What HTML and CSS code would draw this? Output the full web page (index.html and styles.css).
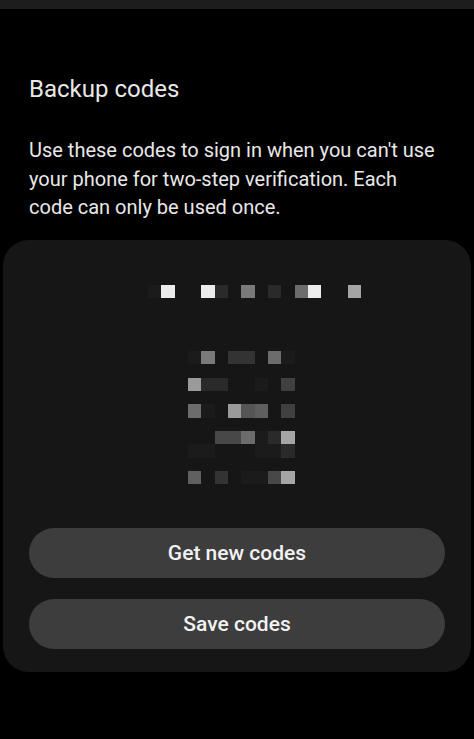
FILE: index.html
```html
<!DOCTYPE html>
<html lang="en">
<head>
    <meta charset="UTF-8">
    <meta name="viewport" content="width=device-width, initial-scale=1.0">
    <title>Backup codes</title>
    <link rel="stylesheet" href="styles.css">
</head>
<body>
    <div class="status-bar"></div>
    <div class="page">
        <h1 class="title">Backup codes</h1>
        <p class="description">Use these codes to sign in when you can't use your phone for two-step verification. Each code can only be used once.</p>
    </div>
    <div class="card">
        <div class="codes">
            <!-- row 1 -->
            <div class="cell c-faint" style="grid-area: 1 / 1"></div>
            <div class="cell c-white" style="grid-area: 1 / 2"></div>
            <div class="cell c-white" style="grid-area: 1 / 5"></div>
            <div class="cell c-dark" style="grid-area: 1 / 6"></div>
            <div class="cell c-mid" style="grid-area: 1 / 8"></div>
            <div class="cell c-dark" style="grid-area: 1 / 10"></div>
            <div class="cell c-mid2" style="grid-area: 1 / 12"></div>
            <div class="cell c-white" style="grid-area: 1 / 13"></div>
            <div class="cell c-light" style="grid-area: 1 / 16"></div>
            <!-- row 6 -->
            <div class="cell c-faint" style="grid-area: 6 / 4"></div>
            <div class="cell c-mid" style="grid-area: 6 / 5"></div>
            <div class="cell c-dark2" style="grid-area: 6 / 7"></div>
            <div class="cell c-dark2" style="grid-area: 6 / 8"></div>
            <div class="cell c-mid2" style="grid-area: 6 / 10"></div>
            <div class="cell c-faint" style="grid-area: 6 / 11"></div>
            <!-- row 8 -->
            <div class="cell c-light2" style="grid-area: 8 / 4"></div>
            <div class="cell c-dark" style="grid-area: 8 / 5"></div>
            <div class="cell c-dark" style="grid-area: 8 / 6"></div>
            <div class="cell c-faint" style="grid-area: 8 / 9"></div>
            <div class="cell c-dark3" style="grid-area: 8 / 11"></div>
            <!-- row 10 -->
            <div class="cell c-mid2" style="grid-area: 10 / 4"></div>
            <div class="cell c-faint" style="grid-area: 10 / 5"></div>
            <div class="cell c-light2" style="grid-area: 10 / 7"></div>
            <div class="cell c-dim" style="grid-area: 10 / 8"></div>
            <div class="cell c-dim2" style="grid-area: 10 / 9"></div>
            <div class="cell c-dark3" style="grid-area: 10 / 11"></div>
            <!-- row 12 -->
            <div class="cell c-dark4" style="grid-area: 12 / 6"></div>
            <div class="cell c-dark4" style="grid-area: 12 / 7"></div>
            <div class="cell c-mid2" style="grid-area: 12 / 8"></div>
            <div class="cell c-faint" style="grid-area: 12 / 9"></div>
            <div class="cell c-dark" style="grid-area: 12 / 10"></div>
            <div class="cell c-light" style="grid-area: 12 / 11"></div>
            <!-- row 13 -->
            <div class="cell c-faint" style="grid-area: 13 / 4"></div>
            <div class="cell c-faint" style="grid-area: 13 / 5"></div>
            <div class="cell c-faint" style="grid-area: 13 / 9"></div>
            <div class="cell c-faint" style="grid-area: 13 / 10"></div>
            <div class="cell c-dark" style="grid-area: 13 / 11"></div>
            <!-- row 15 -->
            <div class="cell c-mid3" style="grid-area: 15 / 4"></div>
            <div class="cell c-dark2" style="grid-area: 15 / 6"></div>
            <div class="cell c-faint" style="grid-area: 15 / 8"></div>
            <div class="cell c-faint" style="grid-area: 15 / 9"></div>
            <div class="cell c-dark4" style="grid-area: 15 / 10"></div>
            <div class="cell c-light" style="grid-area: 15 / 11"></div>
        </div>
        <div class="actions">
            <button class="btn">Get new codes</button>
            <button class="btn">Save codes</button>
        </div>
    </div>
</body>
</html>
```

FILE: styles.css
```css
body {
    margin: 0;
    background: #000;
    font-family: Roboto, "Noto Sans", sans-serif;
    color: #e8e8e8;
    width: 474px;
    height: 739px;
    overflow: hidden;
}
.status-bar {
    height: 9px;
    background: #1d1d1d;
}
.page {
    padding: 0 30px 0 29px;
}
.title {
    margin: 66px 0 0;
    font-size: 24px;
    line-height: 28px;
    font-weight: 400;
}
.description {
    margin: 33px 0 0;
    font-size: 20px;
    line-height: 28.5px;
}
.card {
    margin: 18px 3px 0;
    background: #161616;
    border-radius: 26px;
    padding: 45px 26px 23px;
}
.codes {
    display: grid;
    grid-template-columns: repeat(16, 13.333px);
    grid-template-rows: repeat(15, 13.333px);
    margin-left: 119px;
}
.cell { background: #161616; }
.c-faint { background: #1b1b1b; }
.c-dark { background: #2a2a2a; }
.c-dark2 { background: #333; }
.c-dark3 { background: #404040; }
.c-dark4 { background: #484848; }
.c-dim { background: #555; }
.c-dim2 { background: #5e5e5e; }
.c-mid3 { background: #606060; }
.c-mid2 { background: #6c6c6c; }
.c-mid { background: #7a7a7a; }
.c-light2 { background: #9a9a9a; }
.c-light { background: #a5a5a5; }
.c-white { background: #ececec; }
.actions {
    display: flex;
    flex-direction: column;
    gap: 21px;
    margin-top: 44px;
}
.btn {
    height: 50px;
    border: none;
    border-radius: 25px;
    background: #3d3d3d;
    color: #f2f2f2;
    font-family: Roboto, "Noto Sans", sans-serif;
    font-size: 21px;
    font-weight: 500;
}
```
